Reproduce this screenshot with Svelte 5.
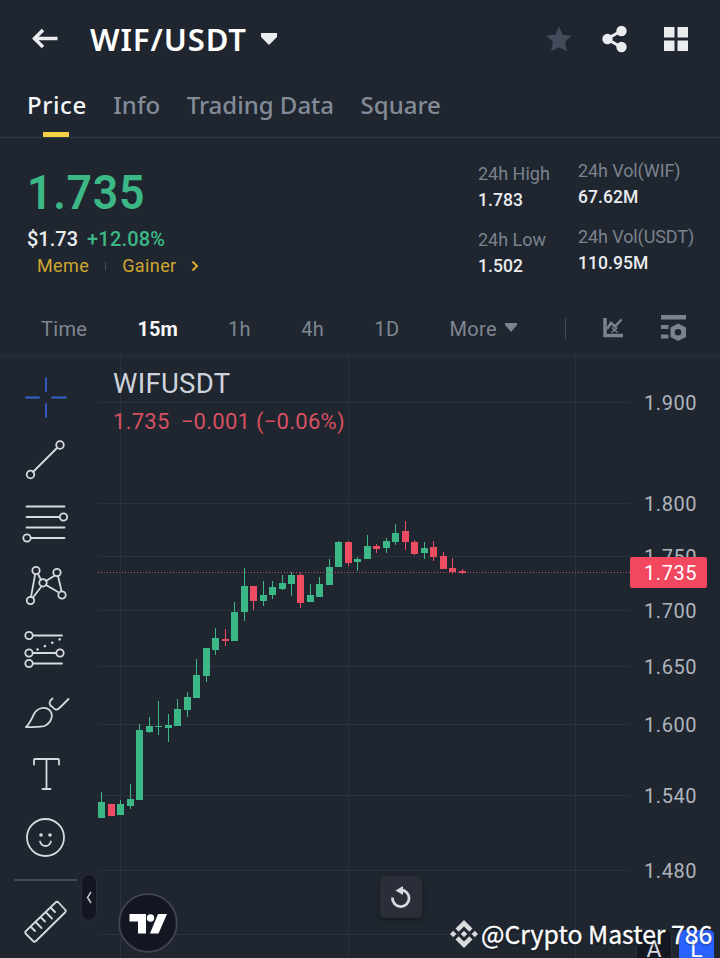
<script lang="ts">
	const tabs = ['Price', 'Info', 'Trading Data', 'Square'];
	const activeTab = 'Price';

	const intervals = ['Time', '15m', '1h', '4h', '1D'];
	const activeInterval = '15m';

	// Price scale labels, y is measured inside the chart
	const priceLabels = [
		{ text: '1.900', y: 48 },
		{ text: '1.800', y: 149 },
		{ text: '1.750', y: 202 },
		{ text: '1.700', y: 256 },
		{ text: '1.650', y: 312 },
		{ text: '1.600', y: 370 },
		{ text: '1.540', y: 441 },
		{ text: '1.480', y: 516 }
	];
	const gridY = [...priceLabels.map((label) => label.y), 580];
	const gridX = [22, 250, 477];

	// left edge, wick top, wick bottom, body top, body bottom, direction
	const candles: [number, number, number, number, number, 'up' | 'down'][] = [
		[0, 438, 464, 448, 464, 'up'],
		[10, 450, 462, 450, 462, 'down'],
		[19, 446, 461, 450, 461, 'up'],
		[29, 430, 455, 445, 452, 'up'],
		[38, 370, 446, 376, 446, 'up'],
		[48, 363, 379, 372, 378, 'up'],
		[57, 347, 381, 372, 373, 'up'],
		[67, 360, 388, 371, 374, 'up'],
		[76, 345, 372, 355, 372, 'up'],
		[86, 338, 363, 343, 356, 'up'],
		[95, 305, 344, 321, 344, 'up'],
		[105, 294, 328, 294, 322, 'up'],
		[114, 274, 301, 284, 296, 'up'],
		[124, 275, 292, 285, 287, 'down'],
		[133, 248, 287, 258, 287, 'up'],
		[143, 214, 267, 232, 258, 'up'],
		[152, 232, 256, 232, 247, 'down'],
		[162, 227, 252, 241, 247, 'up'],
		[171, 227, 245, 233, 241, 'up'],
		[181, 221, 236, 229, 235, 'up'],
		[190, 218, 242, 221, 230, 'up'],
		[199, 219, 254, 221, 249, 'down'],
		[209, 230, 248, 241, 248, 'up'],
		[218, 223, 243, 230, 243, 'up'],
		[228, 205, 231, 213, 231, 'up'],
		[237, 187, 213, 188, 213, 'up'],
		[247, 187, 212, 188, 209, 'down'],
		[256, 203, 217, 205, 208, 'up'],
		[266, 181, 205, 192, 205, 'up'],
		[275, 190, 199, 192, 195, 'down'],
		[285, 184, 199, 187, 194, 'up'],
		[294, 170, 191, 179, 188, 'up'],
		[304, 167, 196, 177, 188, 'down'],
		[313, 186, 201, 188, 200, 'down'],
		[323, 188, 205, 194, 199, 'up'],
		[332, 187, 207, 193, 203, 'down'],
		[342, 198, 215, 202, 215, 'down'],
		[351, 204, 220, 214, 218, 'down'],
		[361, 215, 220, 217, 219, 'down']
	];
</script>

<main>
	<header>
		<svg class="back" width="30" height="24" viewBox="0 0 30 24">
			<path d="M28.500 11.500H4.500M14 3l-8.500 8.500L14 20" />
		</svg>
		<h1>WIF/USDT</h1>
		<svg class="caret" width="18" height="14" viewBox="0 0 18 14">
			<path d="M1 1h16v4L9 13 1 5z" />
		</svg>
		<div class="actions">
			<svg class="star" width="28" height="28" viewBox="0 0 28 28">
				<path d="M14 1.500l3.700 8.200 9 1-6.700 6 1.900 9.300L14 22.400 6.100 26 8 16.700 1.300 10.700l9-1z" />
			</svg>
			<svg class="share" width="28" height="28" viewBox="0 0 28 28">
				<path d="M20 6L6 14l14 8" />
				<circle cx="20.500" cy="6" r="5.200" />
				<circle cx="6.500" cy="14" r="5.200" />
				<circle cx="20.500" cy="22" r="5.200" />
			</svg>
			<svg class="apps" width="24" height="24" viewBox="0 0 24 24">
				<path d="M0 0h10.500v10.500H0zM13.500 0H24v10.500H13.500zM0 13.500h10.500V24H0zM13.500 13.500H24V24H13.500z" />
			</svg>
		</div>
	</header>

	<nav class="tabs">
		{#each tabs as tab}
			<span class="tab" class:active={tab === activeTab}>{tab}</span>
		{/each}
	</nav>

	<section class="ticker">
		<div class="quote">
			<div class="price">1.735</div>
			<div class="change"><b>$1.73</b><span>+12.08%</span></div>
			<div class="tags">
				<span>Meme</span>
				<i></i>
				<span>Gainer</span>
				<svg width="8" height="12" viewBox="0 0 8 12"><path d="M1.500 1.500L6 6l-4.500 4.500" /></svg>
			</div>
		</div>
		<dl class="stats">
			<div><dt>24h High</dt><dd>1.783</dd></div>
			<div><dt>24h Low</dt><dd>1.502</dd></div>
		</dl>
		<dl class="stats volume">
			<div><dt>24h Vol(WIF)</dt><dd>67.62M</dd></div>
			<div><dt>24h Vol(USDT)</dt><dd>110.95M</dd></div>
		</dl>
	</section>

	<nav class="intervals">
		{#each intervals as interval}
			<span class:active={interval === activeInterval}>{interval}</span>
		{/each}
		<span class="more">
			More
			<svg width="12" height="9" viewBox="0 0 12 9"><path d="M0 0h12v2L6 9 0 2z" /></svg>
		</span>
		<i class="divider"></i>
		<svg class="indicator" width="20" height="20" viewBox="0 0 20 20">
			<path class="axis" d="M2 0v17.500h18" />
			<path d="M4 11l4-6 4 3.500L18.500 1.500" />
			<path class="cross" d="M8.500 14.500l6-5M9 9.500l5.500 5" />
		</svg>
		<svg class="settings" width="25" height="26" viewBox="0 0 25 26">
			<path d="M0 0h25v4.500H0zM0 10h7.500v4H0zM0 19.500h7.500v4H0z" />
			<path
				fill-rule="evenodd"
				d="M17 8.500l8 4v9.500l-8 4-7.500-4v-9.500zM17 14a3.300 3.300 0 1 0 0 6.600 3.300 3.300 0 0 0 0-6.600z"
			/>
		</svg>
	</nav>

	<section class="chart">
		<aside class="tools">
			<svg class="crosshair" viewBox="0 0 48 48"><path d="M24 4v13M24 30v13M4 23.500h13M30 23.500h14" /></svg>
			<svg viewBox="0 0 48 48">
				<path d="M11 35l24-24" />
				<circle cx="8.500" cy="37.500" r="3.800" />
				<circle cx="38" cy="8" r="3.800" />
			</svg>
			<svg viewBox="0 0 48 48">
				<path d="M4.500 6.500h38M4.500 17h33M4.500 27.500h38M9 38h33.500" />
				<circle cx="41.500" cy="17" r="3.700" />
				<circle cx="5" cy="38" r="3.700" />
			</svg>
			<svg viewBox="0 0 48 48">
				<path d="M13 12L9 34M11 34.500l8-10.500M16 11l3 6M24 18l8-5M36 13l3.500 15M24 22l12 7" />
				<circle cx="14" cy="7.500" r="3.700" />
				<circle cx="35" cy="9.500" r="3.700" />
				<circle cx="21" cy="19.800" r="3.700" />
				<circle cx="8.500" cy="37.500" r="3.700" />
				<circle cx="40" cy="32" r="3.700" />
			</svg>
			<svg viewBox="0 0 48 48">
				<path d="M11 9.500h29M11 27h23M11 37.500h29" />
				<path class="dots" d="M15.500 23.500l24-11" />
				<circle cx="7" cy="9.500" r="3.700" />
				<circle cx="7" cy="27" r="3.700" />
				<circle cx="38" cy="27" r="3.700" />
				<circle cx="7" cy="37.500" r="3.700" />
			</svg>
			<svg viewBox="0 0 48 48">
				<path d="M4 38c4-4 6-9 8-13 3-6 11-8 15.500-4 4.500 5 2 12-4 15.500-4 2-12 1.500-19.500 1.500z" />
				<path d="M30.500 9.500c-4 3-4 6 0 8.500 3 4 5 3 8 0l8-8" />
			</svg>
			<svg viewBox="0 0 48 48">
				<path d="M12 12.500V8q0-1 1-1h23q1 0 1 1v4.500M24.500 7v30M20.500 37h8" />
			</svg>
			<svg viewBox="0 0 48 48">
				<circle cx="23.500" cy="22.500" r="18.500" />
				<path d="M18 26.500c2 6 9 6 11 0" />
				<circle class="eye" cx="19" cy="20" r="1.800" />
				<circle class="eye" cx="28" cy="20" r="1.800" />
			</svg>
			<hr />
			<svg class="ruler" viewBox="0 0 48 48">
				<path d="M4 33L33.500 4.500q1.500-1.500 3 0l6.500 7q1.500 1.500 0 3L14 43q-1.500 1.500-3 0l-7-7q-1.500-1.500 0-3z" />
				<path d="M9 29l4 4M13.500 24l6 6M19 19.500l4 4M24 14.500l6 6M29 10l4 4" />
			</svg>
			<button class="collapse" aria-label="Hide toolbar">
				<svg width="6" height="13" viewBox="0 0 6 13"><path d="M5 1L1.500 6.500 5 12" /></svg>
			</button>
		</aside>

		<div class="plot">
			<svg class="canvas" width="622" height="604" viewBox="0 0 622 604">
				{#each gridX as x}
					<rect class="grid" {x} y="0" width="1" height="604" />
				{/each}
				{#each gridY as y}
					<rect class="grid" x="0" {y} width="532" height="1" />
				{/each}
				{#each priceLabels as label}
					<text class="scale" x="546" y={label.y + 7.5} textLength="52.500">{label.text}</text>
				{/each}
				{#each candles as [x, high, low, top, bottom, direction]}
					<g class={direction}>
						<rect x={x + 3} y={high} width="1" height={low - high} />
						<rect {x} y={top} width="7" height={bottom - top} />
					</g>
				{/each}
				<path class="last-line" d="M0 218.500h532" />
				<rect class="last-tag" x="532" y="203" width="77" height="31" rx="2" />
				<text class="last-text" x="546" y="226" textLength="52.500">1.735</text>
			</svg>

			<div class="legend">
				<div class="symbol">WIFUSDT</div>
				<div class="values"><span>1.735</span><span>−0.001 (−0.06%)</span></div>
			</div>

			<svg class="tv-logo" width="60" height="60" viewBox="0 0 60 60">
				<circle class="disc" cx="30" cy="30" r="28.800" />
				<path d="M11.500 21h16.500v19.500h-8V28.500h-8.500z" />
				<circle cx="32.500" cy="25" r="3.700" />
				<path d="M40 21h9l-8.500 19.500H32z" />
			</svg>

			<button class="reset" aria-label="Reset chart">
				<svg width="22" height="24" viewBox="0 0 22 24">
					<path d="M2.500 12.500A8.300 8.300 0 1 0 11 5" />
					<path class="tip" d="M5.500 5.500l7.500-4.500v9z" />
				</svg>
			</button>

			<div class="scale-mode auto">A</div>
			<div class="scale-mode log">L</div>
		</div>
	</section>

	<div class="watermark">
		<svg width="28" height="28" viewBox="0 0 28 28">
			<path d="M14 0l8.500 8.500-3.200 3.200L14 6.400l-5.300 5.300-3.200-3.200zM14 28l8.500-8.500-3.200-3.200-5.300 5.300-5.300-5.300-3.200 3.200zM0 14l3.200-3.200L6.400 14l-3.200 3.200zM21.600 14l3.200-3.200L28 14l-3.200 3.200zM10.700 14l3.300-3.300 3.300 3.300-3.300 3.300z" />
		</svg>
		<span>@Crypto Master 786</span>
	</div>
</main>

<style>
	:global(body) {
		margin: 0;
		background: #1f262f;
	}

	main {
		position: relative;
		width: 720px;
		height: 958px;
		overflow: hidden;
		background: #1f262f;
		color: #eaecef;
		font-family: Roboto, 'Liberation Sans', sans-serif;
		white-space: nowrap;
	}

	svg {
		display: block;
		flex: none;
	}

	button {
		padding: 0;
		border: 0;
	}

	header {
		display: flex;
		align-items: center;
		height: 80px;
		box-sizing: border-box;
		padding: 0 31px 3px 29px;
	}

	.back {
		fill: none;
		stroke: #eaecef;
		stroke-width: 3.5;
	}

	h1 {
		width: 157px;
		margin: 1px 0 0 31px;
		font-family: 'Noto Sans', sans-serif;
		font-size: 31px;
		line-height: 40px;
		font-weight: 600;
		letter-spacing: 0.9px;
		color: #fff;
	}

	.caret {
		margin-left: 13px;
		fill: #eaecef;
	}

	.actions {
		display: flex;
		align-items: center;
		margin-left: auto;
	}

	.star {
		fill: #434c5a;
		margin-right: 28px;
	}

	.share {
		margin-right: 35px;
		fill: #eaecef;
	}

	.share path {
		fill: none;
		stroke: #eaecef;
		stroke-width: 3;
	}

	.apps {
		margin-right: 1px;
		fill: #eaecef;
	}

	.tabs {
		display: flex;
		gap: 26.5px;
		height: 58px;
		box-sizing: border-box;
		padding-left: 27px;
		border-bottom: 1px solid #323944;
		font-family: 'Noto Sans', sans-serif;
		font-size: 24px;
		font-weight: 500;
		line-height: 50px;
		color: #848b98;
	}

	.tab.active {
		display: flex;
		flex-direction: column;
		align-items: center;
		letter-spacing: 0.6px;
		color: #f5f6f8;
	}

	.tab.active::after {
		content: '';
		width: 26px;
		height: 5px;
		margin: 2px 2px 0 0;
		background: #f5d143;
	}

	.ticker {
		display: flex;
		height: 164px;
		padding-left: 27px;
	}

	.quote {
		width: 451px;
	}

	/* Condensed digits for the headline price */
	.price {
		margin-top: 29px;
		height: 52px;
		font-size: 49px;
		line-height: 52px;
		font-weight: 600;
		letter-spacing: 0.8px;
		color: #3cb887;
		transform: scaleX(0.91);
		transform-origin: 0 50%;
	}

	.change {
		display: flex;
		gap: 9px;
		margin-top: 7px;
		font-size: 20px;
		line-height: 26px;
	}

	.change b {
		font-weight: 500;
	}

	.change span {
		font-weight: 500;
		letter-spacing: 0.2px;
		color: #3cb887;
	}

	.tags {
		display: flex;
		align-items: center;
		padding-left: 10px;
		font-size: 18px;
		line-height: 28px;
		letter-spacing: 0.4px;
		color: #cfa62f;
	}

	.tags i {
		width: 1px;
		height: 8px;
		margin: 0 16px;
		background: #4b5260;
	}

	.tags svg {
		margin-left: 14px;
		fill: none;
		stroke: #e0ad2c;
		stroke-width: 2;
	}

	.stats {
		width: 100px;
		margin: 23px 0 0;
	}

	.stats.volume {
		margin-top: 20px;
	}

	.stats div {
		height: 66px;
	}

	dt {
		font-size: 18px;
		line-height: 26px;
		color: #7b828e;
	}

	.volume dt {
		letter-spacing: -0.1px;
	}

	dd {
		margin: 0;
		font-size: 17.5px;
		line-height: 26px;
		font-weight: 500;
		letter-spacing: 0.05px;
	}

	.intervals {
		display: flex;
		align-items: center;
		height: 52px;
		padding-left: 41px;
		font-size: 20px;
		letter-spacing: 0.3px;
		color: #7f8692;
	}

	.intervals > span {
		margin: 2px 50.3px 0 0;
	}

	.intervals .active {
		font-weight: 700;
		letter-spacing: 0;
		color: #f5f6f8;
	}

	.intervals .more {
		display: flex;
		align-items: center;
		gap: 8px;
		margin-right: 48px;
	}

	.more svg,
	.settings {
		fill: #7b8292;
	}

	.more svg {
		margin-top: -3px;
	}

	.divider {
		width: 1px;
		height: 21px;
		background: #444b58;
	}

	.indicator {
		margin-left: 37px;
		fill: none;
		stroke: #7b8292;
		stroke-width: 2.5;
	}

	.indicator .axis {
		stroke-width: 3.5;
	}

	.indicator .cross {
		stroke-width: 1.5;
	}

	.settings {
		margin-left: 38px;
	}

	.chart {
		display: grid;
		grid-template-columns: 98px 622px;
		height: 604px;
		box-shadow: inset 0 4px #252b36;
	}

	.tools {
		position: relative;
		display: flex;
		flex-direction: column;
		padding: 12px 0 0 22px;
	}

	.tools > svg {
		width: 48px;
		height: 48px;
		margin: 7.5px 0;
		fill: none;
		stroke: #d5d9e2;
		stroke-width: 1.8;
		stroke-linecap: round;
		stroke-linejoin: round;
	}

	.tools .crosshair {
		stroke: #3462cf;
	}

	.tools .dots {
		stroke-width: 2.5;
		stroke-dasharray: 0.1 8;
	}

	.tools .eye {
		fill: #d5d9e2;
		stroke: none;
	}

	.tools hr {
		width: 63px;
		height: 2px;
		margin: 9px 0 9px -8px;
		border: 0;
		background: #444954;
	}

	.tools .ruler {
		margin: 8px 0 0;
	}

	.collapse {
		position: absolute;
		left: 82px;
		top: 521px;
		display: grid;
		place-items: center;
		width: 14px;
		height: 45px;
		border-radius: 7px;
		background: #131722;
		box-shadow: 0 0 0 1px #2a2e39;
	}

	.collapse svg {
		fill: none;
		stroke: #c3c7d0;
		stroke-width: 1.5;
	}

	.plot {
		position: relative;
	}

	.grid {
		fill: #2b323d;
	}

	.scale {
		font-size: 20px;
		fill: #b0b4be;
	}

	.up {
		fill: #3cb887;
	}

	.down {
		fill: #ed4d63;
	}

	.last-line {
		stroke: #c04f63;
		stroke-dasharray: 1 2;
	}

	.last-tag {
		fill: #f1485f;
	}

	.last-text {
		font-size: 20px;
		fill: #fff;
	}

	.legend {
		position: absolute;
		left: 15px;
		top: 13px;
	}

	.symbol {
		font-size: 27.5px;
		line-height: 34px;
		letter-spacing: 0.3px;
		color: #cfd3dd;
	}

	.values {
		display: flex;
		gap: 11px;
		margin-top: 7px;
		font-size: 22px;
		line-height: 28px;
		letter-spacing: 0.28px;
		color: #d84f62;
	}

	.tv-logo {
		position: absolute;
		left: 20px;
		top: 539px;
		fill: #fff;
	}

	.tv-logo .disc {
		fill: #131722;
		stroke: #434651;
		stroke-width: 1.8;
	}

	.reset {
		position: absolute;
		left: 282px;
		top: 522px;
		display: grid;
		place-items: center;
		width: 42px;
		height: 42px;
		border-radius: 5px;
		background: #2a2e39;
		box-shadow: 0 2px 5px rgba(0, 0, 0, 0.35);
	}

	.reset svg {
		fill: none;
		stroke: #d5d9e2;
		stroke-width: 2.8;
	}

	.reset .tip {
		fill: #d5d9e2;
		stroke: none;
	}

	.scale-mode {
		position: absolute;
		top: 576px;
		height: 38px;
		border-radius: 5px;
		font-size: 23px;
		line-height: 39px;
		text-align: center;
		color: #d5d9e2;
	}

	.auto {
		left: 539px;
		width: 34px;
		background: #131722;
		box-shadow: 0 0 0 1px #2a2e39;
	}

	.log {
		left: 581px;
		width: 35px;
		background: #2962ff;
		color: #fff;
	}

	/* Author mark over the bottom right corner */
	.watermark {
		position: absolute;
		left: 450px;
		top: 916px;
		display: flex;
		align-items: center;
		gap: 3px;
		font-family: 'Noto Sans CJK SC', sans-serif;
		font-size: 24.8px;
		line-height: 36px;
		color: #fff;
		text-shadow: 0 1px 2px rgba(0, 0, 0, 0.5);
	}

	.watermark span {
		margin-top: -1px;
		-webkit-text-stroke: 0.3px #fff;
	}

	.watermark svg {
		margin-top: 1px;
		fill: #d9dadc;
	}
</style>
